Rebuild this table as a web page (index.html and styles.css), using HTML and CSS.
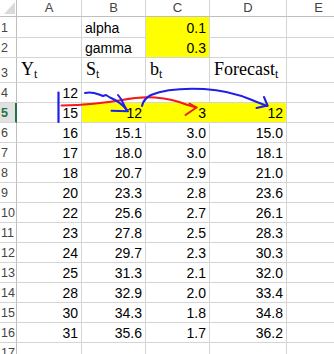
FILE: index.html
```html
<!DOCTYPE html>
<html>
<head>
<meta charset="utf-8">
<link rel="stylesheet" href="styles.css">
</head>
<body>
<div class="wrap">
  <div class="sheet">
    <div class="corner"></div><div class="ch">A</div><div class="ch">B</div><div class="ch">C</div><div class="ch">D</div><div class="ch">E</div>

    <div class="rh">1</div><div class="c"></div><div class="c">alpha</div><div class="c n y ynb">0.1</div><div class="c"></div><div class="c"></div>
    <div class="rh">2</div><div class="c"></div><div class="c">gamma</div><div class="c n y">0.3</div><div class="c"></div><div class="c"></div>
    <div class="rh">3</div><div class="c lbl">Y<sub>t</sub></div><div class="c lbl">S<sub>t</sub></div><div class="c lbl">b<sub>t</sub></div><div class="c lbl">Forecast<sub>t</sub></div><div class="c"></div>
    <div class="rh">4</div><div class="c n">12</div><div class="c"></div><div class="c"></div><div class="c"></div><div class="c"></div>
    <div class="rh sel">5</div><div class="c n">15</div><div class="c n y ynr">12</div><div class="c n y ynr">3</div><div class="c n y">12</div><div class="c"></div>
    <div class="rh">6</div><div class="c n">16</div><div class="c n">15.1</div><div class="c n">3.0</div><div class="c n">15.0</div><div class="c"></div>
    <div class="rh">7</div><div class="c n">17</div><div class="c n">18.0</div><div class="c n">3.0</div><div class="c n">18.1</div><div class="c"></div>
    <div class="rh">8</div><div class="c n">18</div><div class="c n">20.7</div><div class="c n">2.9</div><div class="c n">21.0</div><div class="c"></div>
    <div class="rh">9</div><div class="c n">20</div><div class="c n">23.3</div><div class="c n">2.8</div><div class="c n">23.6</div><div class="c"></div>
    <div class="rh">10</div><div class="c n">22</div><div class="c n">25.6</div><div class="c n">2.7</div><div class="c n">26.1</div><div class="c"></div>
    <div class="rh">11</div><div class="c n">23</div><div class="c n">27.8</div><div class="c n">2.5</div><div class="c n">28.3</div><div class="c"></div>
    <div class="rh">12</div><div class="c n">24</div><div class="c n">29.7</div><div class="c n">2.3</div><div class="c n">30.3</div><div class="c"></div>
    <div class="rh">13</div><div class="c n">25</div><div class="c n">31.3</div><div class="c n">2.1</div><div class="c n">32.0</div><div class="c"></div>
    <div class="rh">14</div><div class="c n">28</div><div class="c n">32.9</div><div class="c n">2.0</div><div class="c n">33.4</div><div class="c"></div>
    <div class="rh">15</div><div class="c n">30</div><div class="c n">34.3</div><div class="c n">1.8</div><div class="c n">34.8</div><div class="c"></div>
    <div class="rh">16</div><div class="c n">31</div><div class="c n">35.6</div><div class="c n">1.7</div><div class="c n">36.2</div><div class="c"></div>
    <div class="rh">17</div><div class="c"></div><div class="c"></div><div class="c"></div><div class="c"></div><div class="c"></div>
  </div>
  <svg class="ink" width="334" height="354" viewBox="0 0 334 354" fill="none" stroke-linecap="round" stroke-linejoin="round">
    <path d="M58.5 92.5 L58.5 122" stroke="#1f1fe8" stroke-width="2.2"/>
    <path d="M61.5 105.5 C 85 105, 105 103, 122 100 C 132 98, 142 96.5, 155 97.5 C 168 98.5, 178 101, 186 104.5 L 196.5 107.5" stroke="#f21a1a" stroke-width="2"/>
    <path d="M189.5 103.5 L196.5 107.5 L185.5 115" stroke="#f21a1a" stroke-width="2"/>
    <path d="M85 93 C 90 92, 95 93, 99 94.5 L 103 96 L 106 95 L 110 97.5 C 116 100, 122 104, 127 110" stroke="#1f1fe8" stroke-width="2"/>
    <path d="M118 95 L 121 99 L 126.5 110 M111.5 110.8 L128 111.3" stroke="#1f1fe8" stroke-width="2"/>
    <path d="M142 106 C 143 101, 146 97.5, 151 95 C 163 90, 183 88, 204 89 C 224 90, 240 95, 252 100 C 258 102.5, 263 104.5, 267.5 106" stroke="#1f1fe8" stroke-width="2"/>
    <path d="M264 97 L267.5 105.5 L256.5 108" stroke="#1f1fe8" stroke-width="2"/>
  </svg>
</div>
</body>
</html>
```
FILE: styles.css
```css
html, body {
  margin: 0;
  padding: 0;
  background: #ffffff;
  overflow: hidden;
}

.wrap {
  position: relative;
  width: 334px;
  height: 354px;
  overflow: hidden;
}

.sheet {
  display: grid;
  grid-template-columns: 17px 65px 64px 64px 77px 64px;
  grid-template-rows: 17px 21px 20px 25px repeat(13, 20px) 20px;
  width: 351px;
  font-family: "Liberation Sans", Arial, sans-serif;
  font-size: 14px;
  color: #000;
}

.sheet > div {
  box-sizing: border-box;
  border-right: 1px solid #d4d4d4;
  border-bottom: 1px solid #d4d4d4;
  white-space: nowrap;
  overflow: hidden;
}

.corner {
  position: relative;
  background: #fff;
  border-color: #bfbfbf !important;
}

.corner::after {
  content: "";
  position: absolute;
  left: 4px;
  top: 2px;
  width: 11px;
  height: 12px;
  background: #dadada;
  clip-path: polygon(100% 0, 100% 100%, 0 100%);
}

.ch {
  display: flex;
  align-items: center;
  justify-content: center;
  font-size: 13px;
  line-height: 16px;
  color: #444;
  border-bottom-color: #bfbfbf !important;
}

.rh {
  display: flex;
  align-items: flex-end;
  padding: 0 0 1px 1px;
  font-size: 12.5px;
  line-height: 16px;
  color: #444;
  border-right-color: #bfbfbf !important;
}

.rh.sel {
  background: #e1e1e1;
  color: #217346;
  font-weight: bold;
  border-right: 2px solid #217346 !important;
}

.c {
  display: flex;
  align-items: flex-end;
  padding: 0 3px 1px 3px;
  line-height: 16px;
}

.c.n {
  justify-content: flex-end;
}

.c.y {
  background: #ffff00;
}

.c.ynb {
  border-bottom-color: #ffff00 !important;
}

.c.ynr {
  border-right-color: #ffff00 !important;
}

.sheet > .c.lbl {
  display: block;
  overflow: visible;
  font-family: "Liberation Serif", "Times New Roman", serif;
  font-size: 18px;
  line-height: 20px;
  padding-top: 1px;
  padding-left: 4px;
}

.c.lbl sub {
  font-size: 12px;
  line-height: 0;
  vertical-align: -3px;
}

.ink {
  position: absolute;
  left: 0;
  top: 0;
  pointer-events: none;
}
```
